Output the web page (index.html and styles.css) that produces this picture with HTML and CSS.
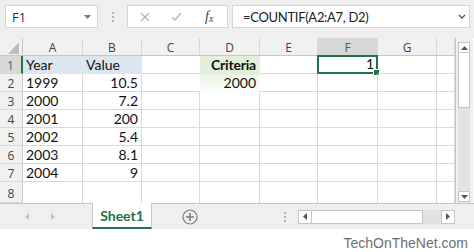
FILE: index.html
```html
<!DOCTYPE html>
<html lang="en">
<head>
    <meta charset="UTF-8">
    <title>COUNTIF example</title>
    <link rel="stylesheet" href="styles.css">
</head>
<body>
    <div class="app">
        <div class="formula-bar">
            <div class="name-box">
                <span>F1</span>
                <svg class="caret" width="7" height="4" viewBox="0 0 7 4"><path d="M0 0h7L3.5 4z" fill="#7a7a7a"/></svg>
            </div>
            <div class="grip"><i></i><i></i><i></i></div>
            <div class="fx-buttons">
                <svg width="10" height="10" viewBox="0 0 10 10"><path d="M1 1l8 8M9 1l-8 8" stroke="#b4b4b4" stroke-width="1.3"/></svg>
                <svg width="11" height="9" viewBox="0 0 11 9"><path d="M1 5l3 3 6-7" stroke="#b4b4b4" stroke-width="1.3" fill="none"/></svg>
                <span class="fx">f<sub>x</sub></span>
            </div>
            <div class="formula">
                <span>=COUNTIF(A2:A7, D2)</span>
                <svg width="8" height="5" viewBox="0 0 8 5"><path d="M1 1l3 3 3-3" stroke="#555" stroke-width="1.3" fill="none"/></svg>
            </div>
        </div>

        <div class="sheet">
            <div class="grid">
                <div class="hdr corner"><svg width="11" height="12" viewBox="0 0 11 12"><path d="M0 12h11V0z" fill="#bdbdbd"/></svg></div>
                <div class="hdr col">A</div>
                <div class="hdr col">B</div>
                <div class="hdr col">C</div>
                <div class="hdr col">D</div>
                <div class="hdr col">E</div>
                <div class="hdr col active">F</div>
                <div class="hdr col">G</div>
                <div class="hdr col"></div>

                <div class="hdr row active">1</div>
                <div class="cell blue">Year</div>
                <div class="cell blue">Value</div>
                <div class="cell no-right"></div>
                <div class="cell green bold num">Criteria</div>
                <div class="cell"></div>
                <div class="cell num selected">1<span class="handle"></span></div>
                <div class="cell"></div>
                <div class="cell"></div>

                <div class="hdr row">2</div>
                <div class="cell">1999</div>
                <div class="cell num">10.5</div>
                <div class="cell no-right"></div>
                <div class="cell green-light num">2000</div>
                <div class="cell"></div>
                <div class="cell"></div>
                <div class="cell"></div>
                <div class="cell"></div>

                <div class="hdr row">3</div>
                <div class="cell">2000</div>
                <div class="cell num">7.2</div>
                <div class="cell"></div>
                <div class="cell"></div>
                <div class="cell"></div>
                <div class="cell"></div>
                <div class="cell"></div>
                <div class="cell"></div>

                <div class="hdr row">4</div>
                <div class="cell">2001</div>
                <div class="cell num">200</div>
                <div class="cell"></div>
                <div class="cell"></div>
                <div class="cell"></div>
                <div class="cell"></div>
                <div class="cell"></div>
                <div class="cell"></div>

                <div class="hdr row">5</div>
                <div class="cell">2002</div>
                <div class="cell num">5.4</div>
                <div class="cell"></div>
                <div class="cell"></div>
                <div class="cell"></div>
                <div class="cell"></div>
                <div class="cell"></div>
                <div class="cell"></div>

                <div class="hdr row">6</div>
                <div class="cell">2003</div>
                <div class="cell num">8.1</div>
                <div class="cell"></div>
                <div class="cell"></div>
                <div class="cell"></div>
                <div class="cell"></div>
                <div class="cell"></div>
                <div class="cell"></div>

                <div class="hdr row">7</div>
                <div class="cell">2004</div>
                <div class="cell num">9</div>
                <div class="cell"></div>
                <div class="cell"></div>
                <div class="cell"></div>
                <div class="cell"></div>
                <div class="cell"></div>
                <div class="cell"></div>

                <div class="hdr row last">8</div>
                <div class="cell last"></div>
                <div class="cell last"></div>
                <div class="cell last"></div>
                <div class="cell last"></div>
                <div class="cell last"></div>
                <div class="cell last"></div>
                <div class="cell last"></div>
                <div class="cell last"></div>
            </div>

            <div class="vscroll">
                <div class="sbtn"><svg width="7" height="4" viewBox="0 0 7 4"><path d="M0 4h7L3.5 0z" fill="#555"/></svg></div>
                <div class="vthumb"></div>
                <div class="vtrack"></div>
                <div class="sbtn"><svg width="7" height="4" viewBox="0 0 7 4"><path d="M0 0h7L3.5 4z" fill="#555"/></svg></div>
            </div>
        </div>

        <div class="tabs">
            <div class="nav">
                <svg width="4" height="7" viewBox="0 0 4 7"><path d="M4 0v7L0 3.5z" fill="#c4c4c4"/></svg>
                <svg width="4" height="7" viewBox="0 0 4 7"><path d="M0 0v7l4-3.5z" fill="#c4c4c4"/></svg>
            </div>
            <div class="tab">Sheet1</div>
            <svg class="add" width="16" height="16" viewBox="0 0 16 16">
                <circle cx="8" cy="8" r="7" fill="none" stroke="#7a7a7a" stroke-width="1.2"/>
                <path d="M8 4v8M4 8h8" stroke="#7a7a7a" stroke-width="1.6"/>
            </svg>
            <div class="spacer"></div>
            <div class="grip"><i></i><i></i><i></i></div>
            <div class="hscroll">
                <div class="sbtn"><svg width="4" height="7" viewBox="0 0 4 7"><path d="M4 0v7L0 3.5z" fill="#555"/></svg></div>
                <div class="hthumb"></div>
                <div class="htrack"></div>
                <div class="sbtn"><svg width="4" height="7" viewBox="0 0 4 7"><path d="M0 0v7l4-3.5z" fill="#555"/></svg></div>
            </div>
        </div>

        <div class="credit">TechOnTheNet.com</div>
    </div>
</body>
</html>
```

FILE: styles.css
```css
body {
    margin: 0;
    background: #fff;
    font-family: Lato, "Open Sans", sans-serif;
    color: #222;
}

.app {
    width: 474px;
    height: 252px;
    overflow: hidden;
}

/* formula bar */
.formula-bar {
    height: 38px;
    background: #efefef;
    display: flex;
    align-items: flex-start;
    padding: 5px 4px 0 5px;
    box-sizing: border-box;
}

.name-box {
    width: 93px;
    height: 23px;
    background: #fff;
    border: 1px solid #d6d6d6;
    box-sizing: border-box;
    display: flex;
    align-items: center;
    justify-content: space-between;
    padding: 0 6px 0 6px;
    font-family: "Open Sans", sans-serif;
    font-size: 13px;
    color: #333;
}

.grip {
    width: 29px;
    height: 23px;
    display: flex;
    flex-direction: column;
    align-items: center;
    justify-content: center;
    gap: 2px;
}

.grip i {
    width: 2px;
    height: 2px;
    background: #b0b0b0;
}

.fx-buttons {
    width: 101px;
    height: 23px;
    background: #fff;
    border: 1px solid #d6d6d6;
    box-sizing: border-box;
    display: flex;
    align-items: center;
    padding-left: 12px;
    gap: 21px;
}

.fx {
    font-family: "Liberation Serif", serif;
    font-style: italic;
    font-size: 14px;
    color: #444;
    margin-left: 2px;
}

.fx sub {
    font-size: 10px;
    vertical-align: -1px;
}

.formula {
    flex: 1;
    margin-left: 4px;
    height: 23px;
    background: #fff;
    border: 1px solid #d6d6d6;
    box-sizing: border-box;
    display: flex;
    align-items: center;
    justify-content: space-between;
    padding: 0 3px 0 10px;
    font-size: 13px;
    letter-spacing: -0.3px;
    color: #222;
}

/* sheet */
.sheet {
    display: flex;
    height: 165px;
}

.grid {
    display: grid;
    grid-template-columns: 23px 60px 59px 58px 60px 58px 60px 59px 18px;
    grid-template-rows: repeat(8, 18px) 21px;
    border-right: 1px solid #c6c6c6;
}

.hdr {
    background: #f1f1f1;
    font-family: "Open Sans", sans-serif;
    font-size: 12px;
    color: #444;
    display: flex;
    align-items: center;
    justify-content: center;
    box-sizing: border-box;
}

.hdr.col {
    border-right: 1px solid #d8d8d8;
    border-bottom: 1px solid #c6c6c6;
    padding-top: 1px;
}

.hdr.corner {
    border-bottom: 1px solid #c6c6c6;
    border-right: 1px solid #c6c6c6;
    justify-content: flex-end;
    align-items: flex-end;
    padding: 0 3px 1px 0;
}

.hdr.row {
    border-right: 1px solid #c6c6c6;
    border-bottom: 1px solid #d8d8d8;
    padding-top: 2px;
}

.hdr.active {
    background: #d8d8d8;
    color: #217346;
}

.hdr.col.active {
    border-bottom: 1px solid #217346;
}

.hdr.row.active {
    border-right: 2px solid #217346;
}

.cell {
    border-right: 1px solid #dadada;
    border-bottom: 1px solid #dadada;
    box-sizing: border-box;
    font-size: 14px;
    color: #111;
    display: flex;
    align-items: flex-end;
    padding: 0 3px 0 3px;
    line-height: 16px;
    white-space: nowrap;
    position: relative;
}

.cell.num {
    justify-content: flex-end;
}

.cell.bold {
    font-weight: bold;
    letter-spacing: -0.2px;
}

.cell.last {
    border-bottom: none;
}

.cell.no-right {
    border-right-color: transparent;
}

.cell.blue {
    background: #dce6f1;
    border-color: #dce6f1;
}

.cell.green {
    background: #e2efda;
    border-color: #e2efda;
}

.cell.green-light {
    background: linear-gradient(#ebf5e6, #fafdf9);
    border-color: #f6fbf4;
}

.cell.selected {
    border: 2px solid #217346;
    margin: -1px 0 0 -1px;
    padding-right: 2px;
    padding-bottom: 0;
}

.handle {
    position: absolute;
    right: -4px;
    bottom: -4px;
    width: 5px;
    height: 5px;
    background: #217346;
    border: 1px solid #fff;
}

/* scrollbars */
.vscroll {
    width: 17px;
    display: flex;
    flex-direction: column;
    padding: 4px 3px 1px 2px;
    box-sizing: border-box;
    background: #efefef;
}

.sbtn {
    background: #fff;
    border: 1px solid #c6c6c6;
    box-sizing: border-box;
    display: flex;
    align-items: center;
    justify-content: center;
}

.vscroll .sbtn {
    height: 11px;
}

.vthumb {
    height: 55px;
    background: #fff;
    border: 1px solid #c6c6c6;
    border-top: none;
    box-sizing: border-box;
}

.vtrack {
    flex: 1;
    background: #e2e2e2;
}

/* tab bar */
.tabs {
    height: 26px;
    background: #efefef;
    border-top: 1px solid #c6c6c6;
    box-sizing: border-box;
    display: flex;
    align-items: stretch;
}

.nav {
    width: 92px;
    display: flex;
    align-items: center;
    gap: 22px;
    padding-left: 25px;
    box-sizing: border-box;
}

.tab {
    width: 60px;
    background: #fff;
    border-left: 1px solid #c6c6c6;
    border-right: 1px solid #c6c6c6;
    border-bottom: 2px solid #217346;
    box-sizing: border-box;
    margin-top: -1px;
    color: #217346;
    font-weight: bold;
    font-size: 14px;
    display: flex;
    align-items: center;
    justify-content: center;
}

.add {
    align-self: center;
    margin-left: 30px;
}

.spacer {
    flex: 1;
}

.tabs .grip {
    height: auto;
    width: 26px;
}

.hscroll {
    width: 157px;
    display: flex;
    align-items: center;
    margin-right: 19px;
}

.hscroll .sbtn {
    width: 14px;
    height: 14px;
}

.hthumb {
    width: 111px;
    height: 14px;
    background: #fff;
    border: 1px solid #c6c6c6;
    border-left: none;
    box-sizing: border-box;
}

.htrack {
    flex: 1;
    height: 14px;
    background: #e2e2e2;
}

.credit {
    text-align: right;
    padding: 6px 6px 0 0;
    font-family: "Liberation Sans", Arial, sans-serif;
    font-size: 14px;
    color: #707070;
}
```
